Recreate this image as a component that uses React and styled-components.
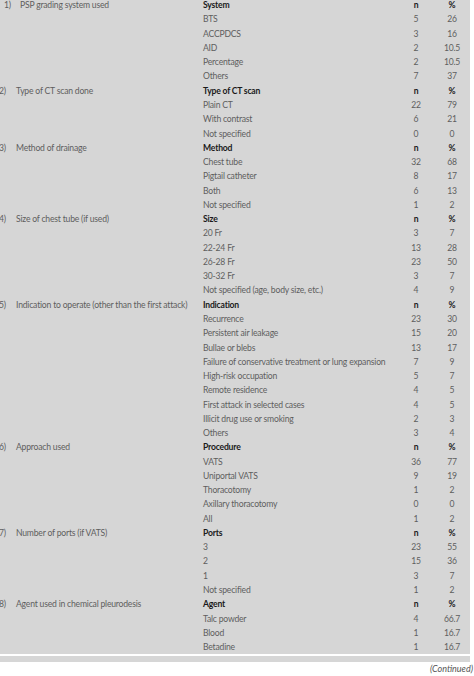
import * as React from "react"
import styled, { createGlobalStyle } from "styled-components"

const GlobalStyle = createGlobalStyle`
  html, body {
    margin: 0;
    padding: 0;
    background: #ffffff;
  }
  body {
    font-family: Lato, "Open Sans", sans-serif;
    overflow: hidden;
  }
`

const Page = styled.div`
  width: 474px;
  height: 676px;
  overflow: hidden;
`

const TableBox = styled.div`
  width: 470px;
  background: #d6d6d6;
  margin-top: -2px;
`

const Row = styled.div`
  display: grid;
  grid-template-columns: 16px 187px 195px 36px 36px;
  height: 14.27px;
  align-items: center;
  font-size: 8.6px;
  letter-spacing: -0.2px;
  color: ${(p) => (p.$head ? "#1a1a1a" : "#5e5e5e")};
  font-weight: ${(p) => (p.$head ? 700 : 400)};
  white-space: nowrap;
`

const Num = styled.span`
  color: #5e5e5e;
  font-weight: 400;
  margin-left: ${(p) => (p.$first ? "4px" : "-1px")};
`

const Label = styled.span`
  color: #5e5e5e;
  font-weight: 400;
  padding-left: ${(p) => (p.$first ? "4px" : "0")};
`

const Cell = styled.span`
  overflow: visible;
`

const Center = styled.span`
  text-align: center;
`

const Rule = styled.div`
  height: 2px;
  background: #ffffff;
`

const Foot = styled.div`
  height: 6px;
`

const Continued = styled.div`
  width: 473px;
  text-align: right;
  font-style: italic;
  font-size: 9px;
  color: #555;
  margin-top: 1px;
`

const sections = [
  {
    label: "PSP grading system used",
    head: "System",
    rows: [
      ["BTS", "5", "26"],
      ["ACCPDCS", "3", "16"],
      ["AID", "2", "10.5"],
      ["Percentage", "2", "10.5"],
      ["Others", "7", "37"],
    ],
  },
  {
    label: "Type of CT scan done",
    head: "Type of CT scan",
    rows: [
      ["Plain CT", "22", "79"],
      ["With contrast", "6", "21"],
      ["Not specified", "0", "0"],
    ],
  },
  {
    label: "Method of drainage",
    head: "Method",
    rows: [
      ["Chest tube", "32", "68"],
      ["Pigtail catheter", "8", "17"],
      ["Both", "6", "13"],
      ["Not specified", "1", "2"],
    ],
  },
  {
    label: "Size of chest tube (if used)",
    head: "Size",
    rows: [
      ["20 Fr", "3", "7"],
      ["22-24 Fr", "13", "28"],
      ["26-28 Fr", "23", "50"],
      ["30-32 Fr", "3", "7"],
      ["Not specified (age, body size, etc.)", "4", "9"],
    ],
  },
  {
    label: "Indication to operate (other than the first attack)",
    head: "Indication",
    rows: [
      ["Recurrence", "23", "30"],
      ["Persistent air leakage", "15", "20"],
      ["Bullae or blebs", "13", "17"],
      ["Failure of conservative treatment or lung expansion", "7", "9"],
      ["High-risk occupation", "5", "7"],
      ["Remote residence", "4", "5"],
      ["First attack in selected cases", "4", "5"],
      ["Illicit drug use or smoking", "2", "3"],
      ["Others", "3", "4"],
    ],
  },
  {
    label: "Approach used",
    head: "Procedure",
    rows: [
      ["VATS", "36", "77"],
      ["Uniportal VATS", "9", "19"],
      ["Thoracotomy", "1", "2"],
      ["Axillary thoracotomy", "0", "0"],
      ["All", "1", "2"],
    ],
  },
  {
    label: "Number of ports (if VATS)",
    head: "Ports",
    rows: [
      ["3", "23", "55"],
      ["2", "15", "36"],
      ["1", "3", "7"],
      ["Not specified", "1", "2"],
    ],
  },
  {
    label: "Agent used in chemical pleurodesis",
    head: "Agent",
    rows: [
      ["Talc powder", "4", "66.7"],
      ["Blood", "1", "16.7"],
      ["Betadine", "1", "16.7"],
    ],
  },
]

export default function App() {
  return (
    <Page>
      <GlobalStyle />
      <TableBox>
        {sections.map((s, i) => (
          <React.Fragment key={s.head}>
            <Row $head>
              <Num $first={i === 0}>{i + 1})</Num>
              <Label $first={i === 0}>{s.label}</Label>
              <Cell>{s.head}</Cell>
              <Center>n</Center>
              <Center>%</Center>
            </Row>
            {s.rows.map((r) => (
              <Row key={r[0]}>
                <span />
                <span />
                <Cell>{r[0]}</Cell>
                <Center>{r[1]}</Center>
                <Center>{r[2]}</Center>
              </Row>
            ))}
          </React.Fragment>
        ))}
        <Rule />
        <Foot />
      </TableBox>
      <Continued>(Continued)</Continued>
    </Page>
  )
}
